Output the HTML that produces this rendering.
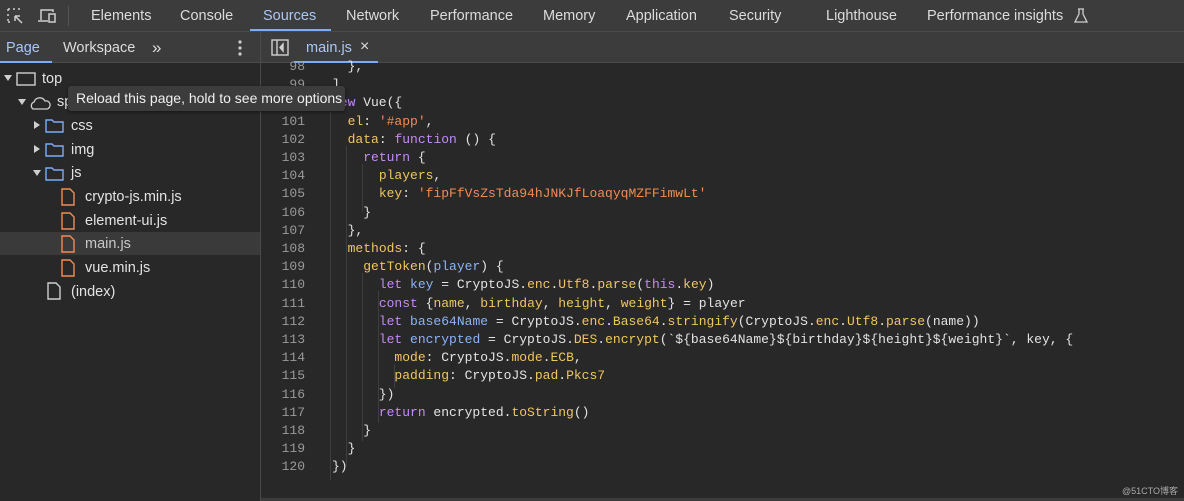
<!DOCTYPE html>
<html><head><meta charset="utf-8"><style>
*{margin:0;padding:0;box-sizing:border-box}
body{width:1184px;height:501px;background:#282828;font-family:"Liberation Sans",sans-serif;color:#e3e3e3;position:relative;overflow:hidden}
.bar1{position:absolute;left:0;top:0;width:1184px;height:32px;background:#3c3c3c;border-bottom:1px solid #4a4a4a}
.t{position:absolute;top:8px;font-size:14.5px;color:#dcdcdc}
.bar2{position:absolute;left:0;top:32px;width:1184px;height:31px;background:#3c3c3c;border-bottom:1px solid #4a4a4a}
.side{position:absolute;left:0;top:63px;width:261px;height:438px;background:#282828;border-right:1px solid #4a4a4a}
.row{position:absolute;font-size:14.5px;color:#e3e3e3;height:24px;line-height:24px}
.code{position:absolute;left:261px;top:63px;right:0;bottom:3px;background:#282828}
.ln{position:absolute;width:43px;left:262px;text-align:right;font:13px/18.2px "Liberation Mono",monospace;color:#9a9a9a}
.cl{position:absolute;left:332px;font:13px/18.2px "Liberation Mono",monospace;white-space:pre;color:#e3e3e3}
.k{color:#c58af9}.p{color:#f0c65f}.s{color:#f28b54}.v{color:#8ab4f8}
.g{position:absolute;width:1px;background:#3e3e3e}
</style></head><body>
<div class="bar1">
<svg style="position:absolute;left:6px;top:7px" width="20" height="18" viewBox="0 0 20 18" fill="none" stroke="#cfcfcf" stroke-width="1.5"><path d="M2 2h2M7 2h2M12 2h2M2 2v2M2 7v2M2 12v2M2 15h2"/><path d="M9 9l7 7M9 9h5M9 9v5"/></svg>
<svg style="position:absolute;left:37px;top:7px" width="22" height="18" viewBox="0 0 22 18" fill="none" stroke="#cfcfcf" stroke-width="1.5"><path d="M4 13V3h12v2"/><path d="M1 14h10"/><rect x="12" y="7" width="6" height="8"/></svg>
<div style="position:absolute;left:68px;top:6px;width:1px;height:20px;background:#555"></div>
<span class="t" style="left:91px">Elements</span>
<span class="t" style="left:180px">Console</span>
<span class="t" style="left:263px;color:#a8c7fa">Sources</span>
<div style="position:absolute;left:250px;top:29px;width:81px;height:2px;background:#7cacf8"></div>
<span class="t" style="left:346px">Network</span>
<span class="t" style="left:430px">Performance</span>
<span class="t" style="left:543px">Memory</span>
<span class="t" style="left:626px">Application</span>
<span class="t" style="left:729px">Security</span>
<span class="t" style="left:826px">Lighthouse</span>
<span class="t" style="left:927px">Performance insights</span>
<svg style="position:absolute;left:1074px;top:8px" width="14" height="15" viewBox="0 0 14 15" fill="none" stroke="#cfcfcf" stroke-width="1.3"><path d="M4 1h6M5 1v5L1 14h12L9 6V1"/></svg>
</div>
<div class="bar2">
<span class="t" style="left:6px;top:8px;color:#a8c7fa">Page</span>
<div style="position:absolute;left:0;top:29px;width:52px;height:2px;background:#7cacf8"></div>
<span class="t" style="left:63px;top:8px">Workspace</span>
<span class="t" style="left:152px;top:6px;font-size:17px">&#187;</span>
<svg style="position:absolute;left:238px;top:8px" width="4" height="16"><circle cx="2" cy="2" r="1.6" fill="#cfcfcf"/><circle cx="2" cy="8" r="1.6" fill="#cfcfcf"/><circle cx="2" cy="14" r="1.6" fill="#cfcfcf"/></svg>
<div style="position:absolute;left:260px;top:0;width:1px;height:31px;background:#4a4a4a"></div>
<svg style="position:absolute;left:271px;top:7px" width="18" height="17" viewBox="0 0 18 17" fill="none" stroke="#cfcfcf" stroke-width="1.4"><rect x="1" y="1" width="16" height="15"/><path d="M6 1v15"/><path d="M12 5l-3 3.5 3 3.5z" fill="#cfcfcf"/></svg>
<span class="t" style="left:306px;top:8px;color:#a8c7fa">main.js</span>
<span class="t" style="left:360px;top:6px;font-size:16px">&#215;</span>
<div style="position:absolute;left:294px;top:29px;width:84px;height:2px;background:#7cacf8"></div>
</div>
<div class="side">
<div style="position:absolute;left:0;top:169px;width:260px;height:23px;background:#3a3a3a"></div>
</div>
<svg style="position:absolute;left:0;top:64px" width="260" height="250" fill="none">
<path d="M4 11l8 0-4 6z" fill="#cfcfcf"/><rect x="17" y="9" width="18" height="12" stroke="#cfcfcf" stroke-width="1.4"/>
<path d="M18 35h8l-4 6z" fill="#cfcfcf"/><path d="M33 45h14a4 4 0 0 0 -2-8 6 6 0 0 0 -11 1 4 4 0 0 0 -1 7z" stroke="#cfcfcf" stroke-width="1.3"/>
<path d="M34 57v8l6-4z" fill="#cfcfcf"/><path d="M46 56h6l2 2h9v10H46z" stroke="#7cacf8" stroke-width="1.4"/>
<path d="M34 81v8l6-4z" fill="#cfcfcf"/><path d="M46 80h6l2 2h9v10H46z" stroke="#7cacf8" stroke-width="1.4"/>
<path d="M33 106h8l-4 6z" fill="#cfcfcf"/><path d="M46 104h6l2 2h9v10H46z" stroke="#7cacf8" stroke-width="1.4"/>
<g stroke="#f28b54" stroke-width="1.4"><path d="M62 125h8l4 4v12H62z"/><path d="M62 149h8l4 4v12H62z"/><path d="M62 172h8l4 4v12H62z"/><path d="M62 196h8l4 4v12H62z"/></g>
<path d="M48 219h8l4 4v12H48z" stroke="#cfcfcf" stroke-width="1.4"/>
</svg>
<div class="row" style="left:42px;top:67px">top</div>
<div class="row" style="left:57px;top:90px">sp</div>
<div class="row" style="left:71px;top:114px">css</div>
<div class="row" style="left:71px;top:138px">img</div>
<div class="row" style="left:71px;top:161px">js</div>
<div class="row" style="left:85px;top:185px">crypto-js.min.js</div>
<div class="row" style="left:85px;top:209px">element-ui.js</div>
<div class="row" style="left:85px;top:232px;color:#c8c8c8">main.js</div>
<div class="row" style="left:85px;top:256px">vue.min.js</div>
<div class="row" style="left:71px;top:280px">(index)</div>
<div class="code"></div>
<div class="g" style="left:330px;top:100px;height:380px"></div>
<div class="g" style="left:346px;top:146px;height:320px"></div>
<div class="g" style="left:362px;top:164px;height:48px"></div>
<div class="g" style="left:362px;top:273px;height:168px"></div>
<div class="g" style="left:378px;top:291px;height:132px"></div>
<div class="g" style="left:394px;top:364px;height:24px"></div>
<div class="ln" style="top:58px">98<br>99<br>100<br>101<br>102<br>103<br>104<br>105<br>106<br>107<br>108<br>109<br>110<br>111<br>112<br>113<br>114<br>115<br>116<br>117<br>118<br>119<br>120</div>
<div class="cl" style="top:58px">  },
]
<span class="k">new</span> Vue({
  <span class="p">el</span>: <span class="s">'#app'</span>,
  <span class="p">data</span>: <span class="k">function</span> () {
    <span class="k">return</span> {
      <span class="p">players</span>,
      <span class="p">key</span>: <span class="s">'fipFfVsZsTda94hJNKJfLoaqyqMZFFimwLt'</span>
    }
  },
  <span class="p">methods</span>: {
    <span class="p">getToken</span>(<span class="v">player</span>) {
      <span class="k">let</span> <span class="v">key</span> = CryptoJS.<span class="p">enc</span>.<span class="p">Utf8</span>.<span class="p">parse</span>(<span class="k">this</span>.<span class="p">key</span>)
      <span class="k">const</span> {<span class="p">name</span>, <span class="p">birthday</span>, <span class="p">height</span>, <span class="p">weight</span>} = player
      <span class="k">let</span> <span class="v">base64Name</span> = CryptoJS.<span class="p">enc</span>.<span class="p">Base64</span>.<span class="p">stringify</span>(CryptoJS.<span class="p">enc</span>.<span class="p">Utf8</span>.<span class="p">parse</span>(name))
      <span class="k">let</span> <span class="v">encrypted</span> = CryptoJS.<span class="p">DES</span>.<span class="p">encrypt</span>(`${base64Name}${birthday}${height}${weight}`, key, {
        <span class="p">mode</span>: CryptoJS.<span class="p">mode</span>.<span class="p">ECB</span>,
        <span class="p">padding</span>: CryptoJS.<span class="p">pad</span>.<span class="p">Pkcs7</span>
      })
      <span class="k">return</span> encrypted.<span class="p">toString</span>()
    }
  }
})</div>
<div style="position:absolute;left:68px;top:86px;width:277px;height:25px;background:#3c3c3c;border-radius:3px;font-size:14px;line-height:25px;padding-left:8px;color:#f0f0f0;box-shadow:0 1px 3px rgba(0,0,0,.5)">Reload this page, hold to see more options</div>
<div style="position:absolute;left:261px;top:498px;width:923px;height:3px;background:#3c3c3c"></div>
<div style="position:absolute;right:6px;top:484px;font-size:9px;color:#aaa;font-family:'Liberation Sans','Noto Sans CJK SC',sans-serif">@51CTO博客</div>
</body></html>
